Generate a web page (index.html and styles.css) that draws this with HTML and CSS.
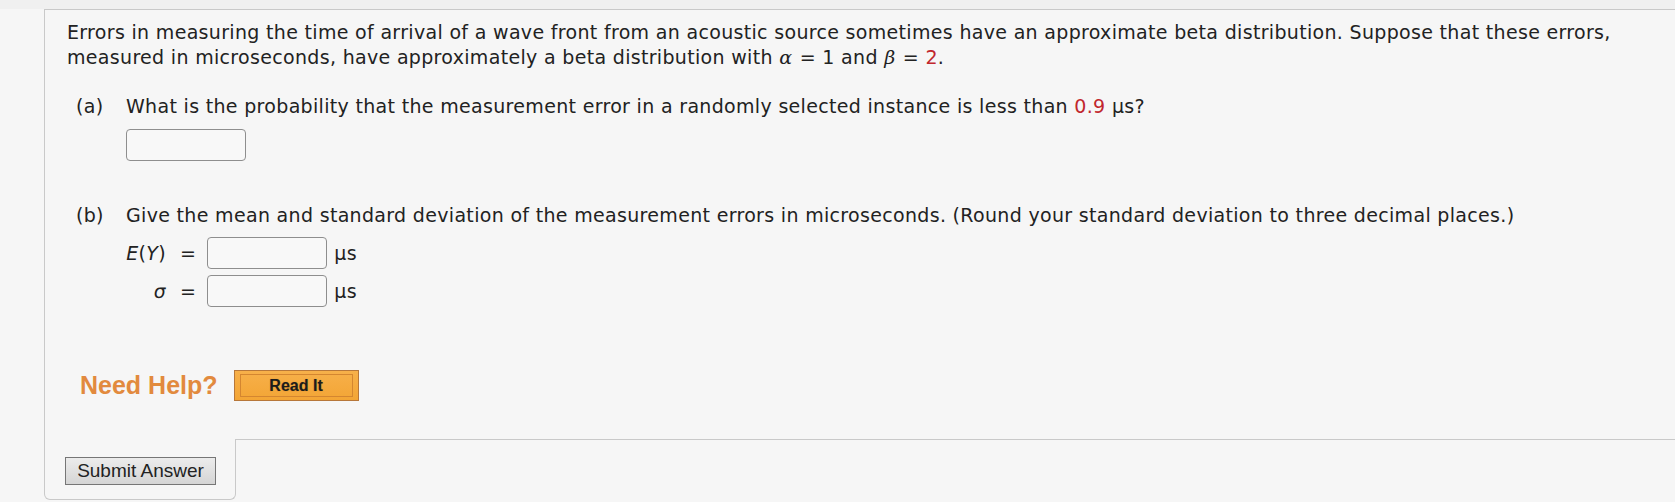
FILE: index.html
```html
<!DOCTYPE html>
<html>
<head>
<meta charset="utf-8">
<title>Question</title>
<link rel="stylesheet" href="styles.css">
</head>
<body>
<div class="topbar"></div>
<div class="page">
  <div class="question">
    <p class="intro">Errors in measuring the time of arrival of a wave front from an acoustic source sometimes have an approximate beta distribution. Suppose that these errors,<br>measured in microseconds, have approximately a beta distribution with <span class="math">α</span>&nbsp;= 1 and <span class="math">β</span>&nbsp;= <span class="red">2</span>.</p>
    <div class="part">
      <span class="plabel">(a)</span>
      <div class="pbody">
        <div class="ptext">What is the probability that the measurement error in a randomly selected instance is less than <span class="red">0.9</span> μs?</div>
        <input class="ans ans-a" type="text">
      </div>
    </div>
    <div class="part part-b">
      <span class="plabel">(b)</span>
      <div class="pbody">
        <div class="ptext">Give the mean and standard deviation of the measurement errors in microseconds. (Round your standard deviation to three decimal places.)</div>
        <div class="eqgrid">
          <span class="lbl"><i>E</i>(<i>Y</i>)</span><span class="eq">=</span><input class="ans" type="text"><span class="unit">μs</span>
          <span class="lbl"><i class="sigma">σ</i></span><span class="eq">=</span><input class="ans" type="text"><span class="unit">μs</span>
        </div>
      </div>
    </div>
    <div class="help">
      <span class="needhelp">Need Help?</span>
      <button class="readit" type="button"><span class="readit-inner">Read It</span></button>
    </div>
  </div>
  <div class="footer">
    <div class="tab"><button class="submit" type="button">Submit Answer</button></div>
    <div class="fill"></div>
  </div>
</div>
</body>
</html>
```

FILE: styles.css
```css
html, body {
  margin: 0;
  padding: 0;
  background: #f6f6f6;
  overflow: hidden;
}
body {
  font-family: "DejaVu Sans", Verdana, sans-serif;
  font-size: 19px;
  color: #222;
}
.topbar {
  height: 9px;
  background: #f0f0f0;
}
.page {
  margin-left: 44px;
}
.question {
  border-top: 1px solid #c9c9c9;
  border-left: 1px solid #c9c9c9;
  padding: 10px 20px 38px 22px;
  letter-spacing: 0.32px;
}
.intro {
  margin: 0 0 24px;
  line-height: 25px;
}
.math {
  display: inline-block;
  font-family: "DejaVu Serif", "Liberation Serif", serif;
  font-style: italic;
  line-height: 20px;
  padding-right: 1px;
}
.red {
  color: #c1272d;
}
.part {
  display: flex;
}
.part-b {
  margin-top: 42px;
}
.plabel {
  width: 50px;
  margin-left: 9px;
  line-height: 25px;
  flex: none;
}
.pbody {
  flex: 1;
}
.ptext {
  line-height: 25px;
}
.ans {
  box-sizing: border-box;
  width: 120px;
  height: 32px;
  border: 1px solid #8e8e8e;
  border-radius: 4px;
  background: #f8f8f8;
  margin: 0;
  padding: 0 4px;
  font: inherit;
}
.ans-a {
  display: block;
  margin-top: 10px;
}
.eqgrid {
  display: grid;
  grid-template-columns: 40px auto auto auto;
  grid-auto-rows: 32px;
  row-gap: 6px;
  margin-top: 9px;
  justify-content: start;
  align-items: center;
}
.lbl {
  text-align: right;
  white-space: nowrap;
}
.sigma {
  font-style: normal;
  display: inline-block;
  transform: skewX(-8deg);
}
.eq {
  margin: 0 11px 0 14px;
}
.unit {
  margin-left: 7px;
}
.help {
  display: flex;
  align-items: center;
  margin-top: 63px;
  height: 31px;
  letter-spacing: 0;
}
.needhelp {
  margin-left: 13px;
  font-family: "Liberation Sans", Arial, sans-serif;
  font-weight: bold;
  font-size: 25px;
  line-height: 31px;
  color: #e28a3e;
}
.readit {
  box-sizing: border-box;
  margin-left: 16px;
  width: 125px;
  height: 31px;
  padding: 3px 5px;
  border: 1px solid #b7773a;
  background: linear-gradient(#f7b04a, #f3a535);
  cursor: pointer;
}
.readit-inner {
  display: flex;
  align-items: center;
  justify-content: center;
  height: 100%;
  box-sizing: border-box;
  border: 1px solid #d48630;
  font-family: "Liberation Sans", Arial, sans-serif;
  font-weight: bold;
  font-size: 16px;
  color: #1c1c1c;
  text-shadow: 0 0 1px rgba(60, 30, 0, 0.35);
}
.footer {
  display: flex;
}
.tab {
  box-sizing: border-box;
  width: 192px;
  height: 61px;
  border-left: 1px solid #c9c9c9;
  border-right: 1px solid #c9c9c9;
  border-bottom: 1px solid #c9c9c9;
  border-radius: 0 0 6px 6px;
  padding: 18px 0 0 20px;
}
.fill {
  flex: 1;
  border-top: 1px solid #c9c9c9;
}
.submit {
  box-sizing: border-box;
  width: 151px;
  height: 28px;
  margin: 0;
  padding: 0;
  border: 1px solid #767676;
  background: linear-gradient(#ececec, #d5d5d5);
  font-family: "Liberation Sans", Arial, sans-serif;
  font-size: 19px;
  color: #222;
  cursor: pointer;
}
```
